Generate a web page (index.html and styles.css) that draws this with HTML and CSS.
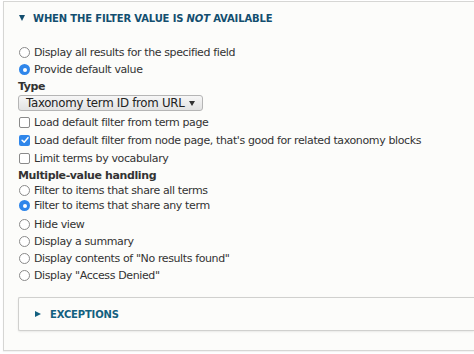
FILE: index.html
```html
<!DOCTYPE html>
<html>
<head>
<meta charset="utf-8">
<link rel="stylesheet" href="styles.css">
</head>
<body>
<div class="fieldset">
  <div class="legend"><span class="tri-down"></span><span class="legend-text">When the filter value is <em>not</em> available</span></div>
  <div class="row r17"><span class="radio"></span><span>Display all results for the specified field</span></div>
  <div class="row r17"><span class="radio on"></span><span>Provide default value</span></div>
  <div class="label l17">Type</div>
  <div class="select"><span class="select-text">Taxonomy term ID from URL</span><span class="arrow"></span></div>
  <div class="row r18 first-cb"><span class="cb"></span><span>Load default filter from term page</span></div>
  <div class="row r18"><span class="cb on"><svg viewBox="0 0 12 12" width="10" height="10"><path d="M2.5 6.3 L5 8.6 L9.6 3.2" fill="none" stroke="#fff" stroke-width="1.8" stroke-linecap="round" stroke-linejoin="round"/></svg></span><span>Load default filter from node page, that's good for related taxonomy blocks</span></div>
  <div class="row r18"><span class="cb"></span><span>Limit terms by vocabulary</span></div>
  <div class="label l16">Multiple-value handling</div>
  <div class="row r15"><span class="radio"></span><span>Filter to items that share all terms</span></div>
  <div class="row r15"><span class="radio on"></span><span>Filter to items that share any term</span></div>
  <div class="row r17 gap3"><span class="radio"></span><span>Hide view</span></div>
  <div class="row r17"><span class="radio"></span><span>Display a summary</span></div>
  <div class="row r17"><span class="radio"></span><span>Display contents of "No results found"</span></div>
  <div class="row r17"><span class="radio"></span><span>Display "Access Denied"</span></div>
  <div class="details"><span class="tri-right"></span><span class="details-text">Exceptions</span></div>
</div>
</body>
</html>
```
FILE: styles.css
```css
html, body {
  margin: 0;
  padding: 0;
  background: #ffffff;
}
body {
  width: 474px;
  height: 354px;
  overflow: hidden;
  font-family: "DejaVu Sans", sans-serif;
  font-size: 11px;
  letter-spacing: -0.38px;
  color: #333333;
}
.fieldset {
  margin: 1px 0 0 3px;
  border: 1px solid #d6d6d4;
  border-right: none;
  background: #fcfcfa;
  padding: 0 0 19px 14px;
  box-shadow: 0 1px 1px rgba(0,0,0,0.05);
}
.legend {
  display: flex;
  align-items: center;
  height: 14px;
  padding-top: 9px;
  margin-bottom: 19px;
  color: #134e6f;
  font-weight: bold;
  text-transform: uppercase;
  font-size: 10px;
  letter-spacing: -0.15px;
}
.tri-down {
  width: 0;
  height: 0;
  border-left: 3.5px solid transparent;
  border-right: 3.5px solid transparent;
  border-top: 6px solid #134e6f;
  margin: 0 8px 0 1px;
}
.legend-text em {
  font-style: italic;
}
.row {
  display: flex;
  align-items: center;
  white-space: nowrap;
}
.r17 { height: 17px; }
.r18 { height: 18px; }
.r15 { height: 15px; }
.gap3 { margin-top: 3px; }
.first-cb { margin-top: 2px; }
.label {
  font-weight: bold;
  display: flex;
  align-items: center;
}
.l17 { height: 17px; }
.l16 { height: 16px; }
.radio {
  box-sizing: border-box;
  width: 11px;
  height: 11px;
  border-radius: 50%;
  border: 1px solid #8a8a8a;
  background: #ffffff;
  margin: 0 4px 0 1px;
  flex: none;
  position: relative;
}
.radio.on {
  border: none;
  background: #2f86ea;
}
.radio.on::after {
  content: "";
  position: absolute;
  left: 3.5px;
  top: 3.5px;
  width: 4px;
  height: 4px;
  border-radius: 50%;
  background: #ffffff;
}
.cb {
  box-sizing: border-box;
  width: 11px;
  height: 11px;
  border-radius: 2px;
  border: 1px solid #8a8a8a;
  background: #ffffff;
  margin: 0 4px 0 1px;
  flex: none;
  display: flex;
  align-items: center;
  justify-content: center;
}
.cb.on {
  border: none;
  background: #2f86ea;
}
.select {
  box-sizing: border-box;
  width: 185px;
  height: 16px;
  display: flex;
  align-items: center;
  justify-content: space-between;
  padding: 0 7px 0 7px;
  border: 1px solid #b5b5b5;
  border-radius: 3px;
  background: linear-gradient(#f6f6f6, #e2e2e2);
  font-size: 11.8px;
  letter-spacing: -0.3px;
  color: #222222;
  white-space: nowrap;
  overflow: hidden;
}
.arrow {
  flex: none;
  width: 0;
  height: 0;
  border-left: 3px solid transparent;
  border-right: 3px solid transparent;
  border-top: 5px solid #333333;
}
.details {
  box-sizing: border-box;
  margin-top: 13px;
  height: 34px;
  border: 1px solid #d0d0ce;
  border-right: none;
  border-radius: 2px 0 0 2px;
  background: #fcfcfa;
  box-shadow: 0 1px 2px rgba(0,0,0,0.08);
  display: flex;
  align-items: center;
  padding-left: 16px;
  color: #13607f;
  font-weight: bold;
  text-transform: uppercase;
  font-size: 10px;
  letter-spacing: -0.15px;
}
.tri-right {
  width: 0;
  height: 0;
  border-top: 3.5px solid transparent;
  border-bottom: 3.5px solid transparent;
  border-left: 6px solid #13607f;
  margin-right: 9px;
}
```
